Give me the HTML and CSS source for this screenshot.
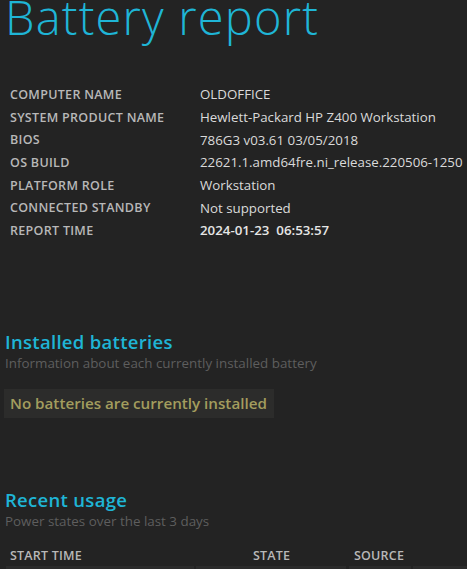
FILE: index.html
```html
<!DOCTYPE html>
<html lang="en">
<head>
    <meta charset="UTF-8">
    <title>Battery report</title>
    <link rel="stylesheet" href="styles.css">
</head>
<body>
<h1 class="title">Battery report</h1>

<table class="info-table">
    <tr><td class="label">COMPUTER NAME</td><td>OLDOFFICE</td></tr>
    <tr><td class="label">SYSTEM PRODUCT NAME</td><td>Hewlett-Packard HP Z400 Workstation</td></tr>
    <tr><td class="label">BIOS</td><td>786G3 v03.61 03/05/2018</td></tr>
    <tr><td class="label">OS BUILD</td><td>22621.1.amd64fre.ni_release.220506-1250</td></tr>
    <tr><td class="label">PLATFORM ROLE</td><td>Workstation</td></tr>
    <tr><td class="label">CONNECTED STANDBY</td><td>Not supported</td></tr>
    <tr><td class="label">REPORT TIME</td><td class="report-time">2024-01-23&nbsp;&nbsp;06:53:57</td></tr>
</table>

<div class="section batteries">
    <h2>Installed batteries</h2>
    <div class="description">Information about each currently installed battery</div>
    <div class="no-battery">No batteries are currently installed</div>
</div>

<div class="section usage">
    <h2>Recent usage</h2>
    <div class="description">Power states over the last 3 days</div>
    <div class="usage-head">
        <span class="col-start">START TIME</span>
        <span class="col-state">STATE</span>
        <span class="col-source">SOURCE</span>
    </div>
    <div class="usage-row">
        <span class="cell cell-date"></span>
        <span class="cell cell-state"></span>
        <span class="cell cell-source"></span>
        <span class="cell cell-capacity"></span>
    </div>
</div>
</body>
</html>
```

FILE: styles.css
```css
body {
    margin: 0;
    padding: 0 0 0 5px;
    background-color: #232323;
    color: #dcdcdc;
    font-family: "Open Sans", "Noto Sans", sans-serif;
    overflow: hidden;
}
.title {
    margin: -15px 0 0 0;
    font-size: 47px;
    font-weight: 300;
    line-height: 64px;
    color: #1fb5d6;
    letter-spacing: 1.2px;
}
.info-table {
    margin-top: 34px;
    border-collapse: collapse;
}
.info-table td {
    padding: 0;
    height: 22.7px;
    font-size: 13.3px;
    color: #dadada;
    white-space: nowrap;
}
.info-table td.label {
    width: 190px;
    padding-left: 5px;
    font-size: 12.5px;
    font-weight: 600;
    letter-spacing: 0.3px;
    color: #b8b8b8;
}
.info-table td.report-time {
    font-weight: 600;
    color: #e6e6e6;
}
.section h2 {
    margin: 0;
    font-size: 18.5px;
    font-weight: 600;
    color: #1fb5d6;
    line-height: 24px;
    letter-spacing: 0.3px;
}
.description {
    font-size: 13.4px;
    color: #5e5e5e;
    line-height: 18px;
}
.batteries {
    margin-top: 88px;
}
.no-battery {
    display: inline-block;
    margin-top: 17px;
    margin-left: -1px;
    padding: 4px 7px 4px 6px;
    line-height: 21px;
    background-color: #2c2c2b;
    color: #a39d5e;
    font-size: 15.2px;
    font-weight: 600;
}
.usage {
    margin-top: 70px;
}
.usage-head {
    display: flex;
    margin-top: 16px;
    height: 20px;
    align-items: center;
    font-size: 12.5px;
    font-weight: 600;
    letter-spacing: 0.2px;
    color: #b8b8b8;
}
.col-start {
    width: 243px;
    padding-left: 5px;
}
.col-state {
    width: 101px;
}
.usage-row {
    display: flex;
    gap: 2px;
    margin-left: 1px;
}
.cell {
    height: 22px;
    background-color: #2b2b2b;
}
.cell-date { width: 188px; }
.cell-state { width: 150px; margin-right: 1px; }
.cell-source { width: 62px; }
.cell-capacity { flex: 1; }
```
